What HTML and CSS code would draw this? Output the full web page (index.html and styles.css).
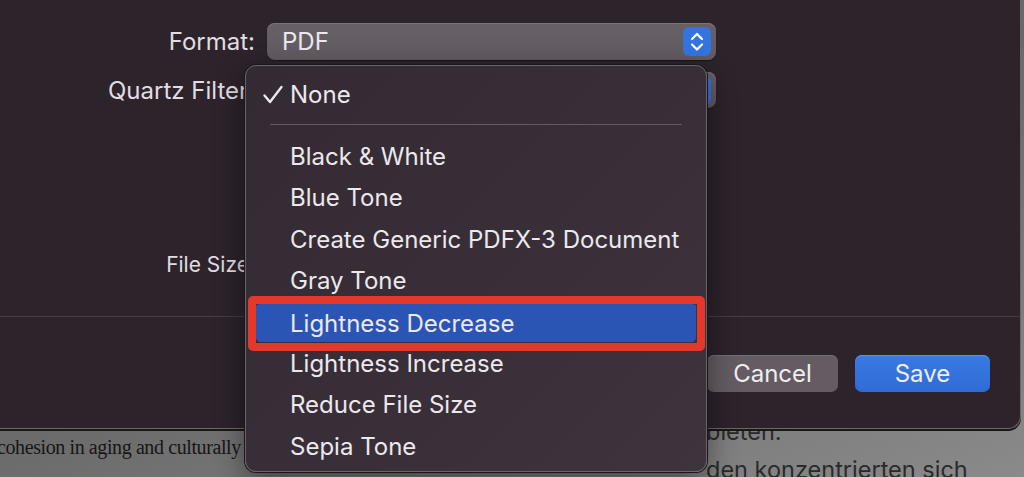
FILE: index.html
```html
<!DOCTYPE html>
<html lang="en">
<head>
<meta charset="utf-8">
<title>Save PDF</title>
<link rel="stylesheet" href="styles.css">
</head>
<body>
<div class="doc">
  <div class="doc-left">cohesion in aging and culturally</div>
  <div class="doc-right">
    <div class="doc-line">bieten.</div>
    <div class="doc-line">den konzentrierten sich</div>
  </div>
</div>

<div class="sheet">
  <div class="form">
    <div class="label">Format:</div>
    <div class="popup">
      <span class="popup-text">PDF</span>
      <svg class="stepper" width="28" height="29" viewBox="0 0 28 29"><rect x="0" y="0" width="28" height="29" rx="6" fill="#3474e0"/><path d="M9 12 L14 7 L19 12" fill="none" stroke="#fff" stroke-width="2.2" stroke-linecap="round" stroke-linejoin="round"/><path d="M9 17.5 L14 22.5 L19 17.5" fill="none" stroke="#fff" stroke-width="2.2" stroke-linecap="round" stroke-linejoin="round"/></svg>
    </div>
    <div class="label">Quartz Filter:</div>
    <div class="popup">
      <span class="popup-text"></span>
      <svg class="stepper" width="28" height="29" viewBox="0 0 28 29"><rect x="0" y="0" width="28" height="29" rx="6" fill="#3474e0"/><path d="M9 12 L14 7 L19 12" fill="none" stroke="#fff" stroke-width="2.2" stroke-linecap="round" stroke-linejoin="round"/><path d="M9 17.5 L14 22.5 L19 17.5" fill="none" stroke="#fff" stroke-width="2.2" stroke-linecap="round" stroke-linejoin="round"/></svg>
    </div>
    <div class="label label-size">File Size:</div>
    <div class="value-size"></div>
  </div>
  <div class="actions">
    <button class="btn btn-cancel">Cancel</button>
    <button class="btn btn-save">Save</button>
  </div>
</div>

<div class="menu">
  <div class="item item-checked">
    <svg class="check" width="22" height="20" viewBox="0 0 22 20"><path d="M2.5 10.5 L8 17 L19.5 2" fill="none" stroke="#ece8ec" stroke-width="2.4" stroke-linecap="round" stroke-linejoin="round"/></svg>
    None
  </div>
  <div class="sep"></div>
  <div class="item">Black &amp; White</div>
  <div class="item">Blue Tone</div>
  <div class="item">Create Generic PDFX-3 Document</div>
  <div class="item">Gray Tone</div>
  <div class="item item-active">Lightness Decrease<span class="mark"></span></div>
  <div class="item">Lightness Increase</div>
  <div class="item">Reduce File Size</div>
  <div class="item">Sepia Tone</div>
</div>
</body>
</html>
```

FILE: styles.css
```css
* { box-sizing: border-box; }

html, body {
  margin: 0;
  width: 1024px;
  height: 477px;
  overflow: hidden;
}

body {
  position: relative;
  font-family: "Inter", "Noto Sans", sans-serif;
  background: linear-gradient(160deg, #5a5a5a 0%, #6c6c6c 55%, #8a8a8a 100%);
}

/* background document */
.doc {
  display: flex;
  padding-top: 430px;
  height: 477px;
}

.doc-left {
  width: 700px;
  margin-left: -3px;
  padding-top: 6px;
  font-family: "Liberation Serif", serif;
  font-size: 20px;
  letter-spacing: -0.4px;
  color: #161616;
  white-space: nowrap;
}

.doc-right {
  display: flex;
  flex-direction: column;
  margin-top: -17px;
  padding-left: 9px;
  font-family: "Inter", "Noto Sans", sans-serif;
  font-size: 23.5px;
  color: #2a2a2a;
}

.doc-line {
  height: 38px;
  line-height: 38px;
  white-space: nowrap;
}

/* dialog sheet */
.sheet {
  position: absolute;
  top: 0;
  left: -12px;
  width: 1033px;
  height: 429px;
  display: flex;
  flex-direction: column;
  background: #2d232b;
  border-right: 1px solid #6e666c;
  border-bottom: 1px solid #6e666c;
  border-bottom-right-radius: 13px;
  box-shadow: 0 2px 0 #1b161a;
}

.form {
  height: 317px;
  display: grid;
  grid-template-columns: 267px 449px;
  column-gap: 12px;
  grid-template-rows: 37px 36px 1fr;
  row-gap: 12px;
  align-content: start;
  padding-top: 23px;
  border-bottom: 1px solid #463c44;
}

.label {
  font-size: 24px;
  color: #e2dde1;
  text-align: right;
  align-self: center;
  white-space: nowrap;
}

.label-size {
  align-self: start;
  margin-top: 132px;
  font-size: 21px;
}

.popup {
  display: flex;
  align-items: center;
  justify-content: space-between;
  padding: 0 5px 0 15px;
  background: linear-gradient(180deg, #676066 0%, #615a60 100%);
  border-radius: 8px;
  box-shadow: inset 0 1px 0 #7a7379, 0 1px 1px #1a1419;
}

.popup-text {
  font-size: 24px;
  color: #ece8ec;
}

.stepper {
  display: block;
}

.actions {
  display: flex;
  justify-content: flex-end;
  gap: 17px;
  padding: 38px 30px 0 0;
}

.btn {
  height: 37px;
  border: none;
  border-radius: 7px;
  font-family: "Inter", "Noto Sans", sans-serif;
  font-size: 24px;
  color: #f0edf0;
  padding: 0;
}

.btn-cancel {
  width: 131px;
  background: #645c62;
  box-shadow: inset 0 1px 0 #766f74;
}

.btn-save {
  width: 135px;
  background: linear-gradient(180deg, #3a7ae2 0%, #2f6bd6 100%);
  box-shadow: inset 0 1px 0 #5a92ea;
}

/* popup menu */
.menu {
  position: absolute;
  left: 245px;
  top: 65px;
  width: 462px;
  height: 407px;
  padding-top: 7.5px;
  background: linear-gradient(135deg, #342a33 0%, #392f38 60%, #3d343d 100%);
  border: 1px solid #6c6269;
  border-radius: 11px;
  box-shadow: 0 0 0 1px #1c161b, 0 10px 30px rgba(0, 0, 0, 0.45);
}

.item {
  position: relative;
  height: 41.4px;
  margin: 0 10px;
  padding-left: 34px;
  display: flex;
  align-items: center;
  font-size: 24px;
  color: #ece8ec;
  white-space: nowrap;
}

.check {
  position: absolute;
  left: 6px;
  top: 11px;
}

.sep {
  height: 21px;
  margin: 0 24px;
  padding-top: 9px;
}

.sep::after {
  content: "";
  display: block;
  height: 1.5px;
  background: #655b63;
}

.item-active {
  background: #2b55b5;
  background-clip: padding-box;
  border-top: 3px solid transparent;
  border-bottom: 1px solid transparent;
  border-radius: 5px;
}

.mark {
  position: absolute;
  left: -8px;
  right: -9px;
  top: -8px;
  bottom: -9px;
  border: 8px solid #e4382d;
  border-radius: 5px;
}
```
